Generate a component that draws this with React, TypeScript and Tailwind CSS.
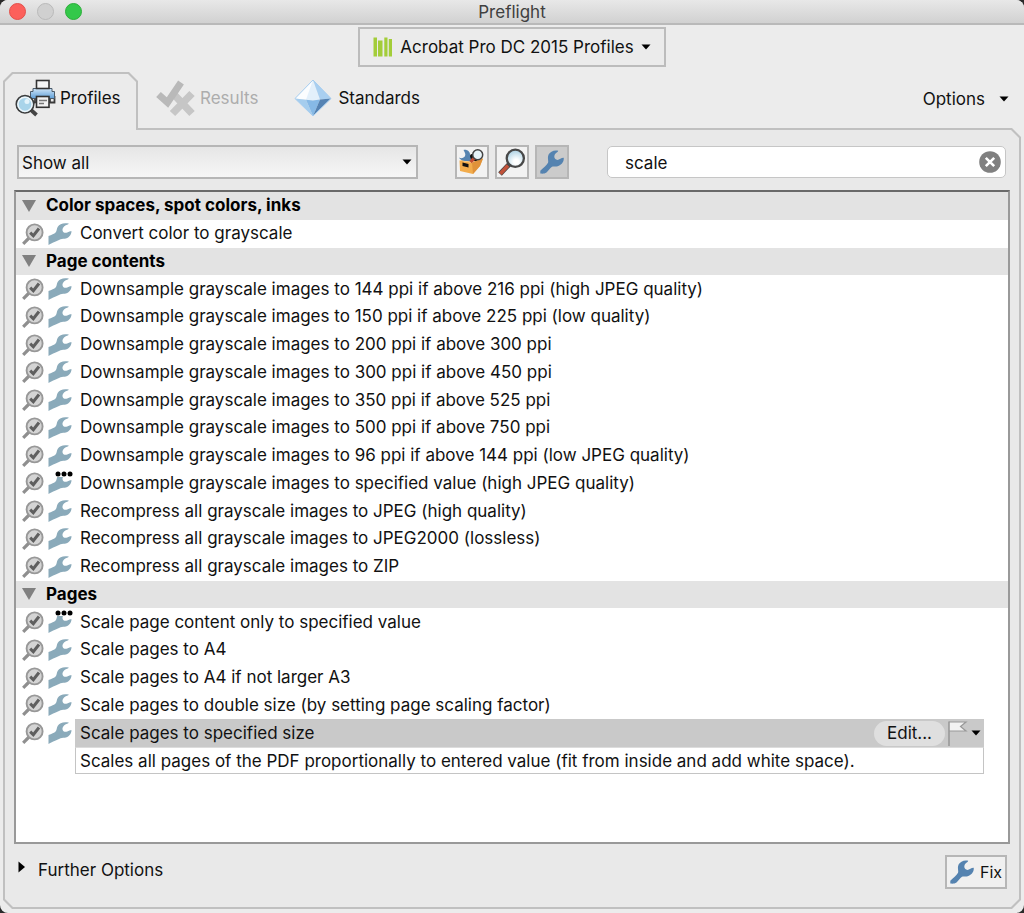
import React, { useState } from "react";

type Item = { label: string; dots?: boolean };
type Group = { title: string; items: Item[] };

const groups: Group[] = [
  { title: "Color spaces, spot colors, inks", items: [{ label: "Convert color to grayscale" }] },
  {
    title: "Page contents",
    items: [
      { label: "Downsample grayscale images to 144 ppi if above 216 ppi (high JPEG quality)" },
      { label: "Downsample grayscale images to 150 ppi if above 225 ppi (low quality)" },
      { label: "Downsample grayscale images to 200 ppi if above 300 ppi" },
      { label: "Downsample grayscale images to 300 ppi if above 450 ppi" },
      { label: "Downsample grayscale images to 350 ppi if above 525 ppi" },
      { label: "Downsample grayscale images to 500 ppi if above 750 ppi" },
      { label: "Downsample grayscale images to 96 ppi if above 144 ppi (low JPEG quality)" },
      { label: "Downsample grayscale images to specified value (high JPEG quality)", dots: true },
      { label: "Recompress all grayscale images to JPEG (high quality)" },
      { label: "Recompress all grayscale images to JPEG2000 (lossless)" },
      { label: "Recompress all grayscale images to ZIP" },
    ],
  },
  {
    title: "Pages",
    items: [
      { label: "Scale page content only to specified value", dots: true },
      { label: "Scale pages to A4" },
      { label: "Scale pages to A4 if not larger A3" },
      { label: "Scale pages to double size (by setting page scaling factor)" },
    ],
  },
];

function Wrench({ className }: { className: string }) {
  return (
    <svg viewBox="0 0 24 24" className={className} aria-hidden="true">
      <path
        fill="currentColor"
        d="M0.500 14C3.500 12.800 6.300 12 7.800 10.200C9 8.700 8.500 6.800 9.800 4.800C11.700 1.800 15.500 0.500 20.800 1.600C20.500 2.900 18.200 2.700 16.300 4.300C14.700 5.700 14 7.800 14.800 9.300C15.700 11 17.500 11 19.300 10.400C21 9.800 22 8.800 23.600 9.300C23.300 13 20.500 16.500 16.500 16.800C14.500 17 13.300 16.700 11 17.900C8 19.500 5.500 20 0.500 23Z"
      />
    </svg>
  );
}

function BoldWrench({ className }: { className: string }) {
  return (
    <svg viewBox="0 0 24 24" className={className} aria-hidden="true">
      <path
        fill="#5583b0"
        d="M0.300 20.800C3.500 18 7 14.800 8 12.800C8.800 11 7 8 8.600 4.600C10.200 1.500 14 -0.300 18.200 0.700C18.300 1.900 15.500 3 14.700 4.800C13.900 6.700 14.300 8.600 16.200 9.600C18.800 10.800 20.800 7.700 23.700 7.800C24.300 11.500 21.500 15.300 17.700 16.200C15.200 16.800 13.500 16 12 16.800C9.800 18 8.500 20.800 6.500 22.500C4.700 23.900 2.500 23.600 0.300 23.600Z"
      />
    </svg>
  );
}

function CheckLens() {
  return (
    <svg viewBox="0 0 22 22" className="size-[22px] shrink-0" aria-hidden="true">
      <path d="M1.200 20.800L7 15" stroke="#8f8f8f" strokeWidth="3.200" />
      <circle cx="12.600" cy="9.400" r="8" fill="#d4d4d4" stroke="#989898" strokeWidth="1.900" />
      <path d="M8.200 9.600L11.300 12.700L17 5.500" fill="none" stroke="#5f5f5f" strokeWidth="3" />
    </svg>
  );
}

function Caret({ className = "" }: { className?: string }) {
  return (
    <svg viewBox="0 0 10 6" className={`w-[10px] h-[6px] shrink-0 ${className}`} aria-hidden="true">
      <path d="M0.500 0.500H9.500L5 5.500Z" fill="#000" />
    </svg>
  );
}

function PrinterIcon() {
  return (
    <svg viewBox="0 0 42 38" className="w-[42px] h-[38px] shrink-0" aria-hidden="true">
      <defs>
        <linearGradient id="printer" x1="0" y1="0" x2="0" y2="1">
          <stop offset="0" stopColor="#cfe5f8" />
          <stop offset="1" stopColor="#5f9fd8" />
        </linearGradient>
      </defs>
      <path d="M19 16h17v8h-17z" fill="#555" />
      <path d="M15.500 17v6.500h5M39.500 17v6.500h-5" fill="none" stroke="#3a3a3a" strokeWidth="1.800" />
      <path d="M18 9.500h19v3h2.500v7h-24v-7h2.500Z" fill="url(#printer)" stroke="#4b5b6b" strokeWidth="1" />
      <rect x="21.500" y="1.500" width="12.500" height="8" fill="#f5f5f5" stroke="#333" strokeWidth="1.600" />
      <rect x="21.500" y="17.500" width="12.500" height="10.800" fill="#f1f1f1" stroke="#333" strokeWidth="1.600" />
      <path d="M24 21.500h8M24 24.500h5" stroke="#777" strokeWidth="1.300" />
      <path d="M15.500 30.500L21.500 36" stroke="#444" strokeWidth="3.800" />
      <circle cx="10" cy="25.300" r="8.700" fill="#a9d4ea" stroke="#3d3d3d" strokeWidth="1.700" />
      <circle cx="10" cy="25.300" r="7.100" fill="none" stroke="#eef6fa" strokeWidth="1.500" />
      <circle cx="12" cy="22.500" r="2.500" fill="#e3f3fb" />
    </svg>
  );
}

function ResultsIcon() {
  return (
    <svg viewBox="0 0 40 38" className="w-[40px] h-[38px] shrink-0" aria-hidden="true">
      <path d="M17 14.500L36 34.500M36 14.500L16.500 34.500" stroke="#c6c6c6" strokeWidth="7.500" />
      <path d="M2.500 15.500L11.500 23.500L25 3.500" fill="none" stroke="#b9b9b9" strokeWidth="7" />
    </svg>
  );
}

function DiamondIcon() {
  return (
    <svg viewBox="0 0 38 38" className="size-[38px] shrink-0" aria-hidden="true">
      <path d="M19 1L1 19.500L19 21.500Z" fill="#fbfdff" />
      <path d="M19 1L12 20.700L19 21.500L26 20.500Z" fill="#e3f0fb" />
      <path d="M19 1L37 19.500L26 20.500Z" fill="#a9cff0" />
      <path d="M1 19.500L12 20.700L19 37Z" fill="#a5cdee" />
      <path d="M12 20.700L19 21.500L26 20.500L19 37Z" fill="#86b9e6" />
      <path d="M37 19.500L26 20.500L19 37Z" fill="#5583b3" />
      <path d="M19 1L37 19.500L19 37L1 19.500Z" fill="none" stroke="#a5cdf0" strokeWidth="1" />
    </svg>
  );
}

function LensIcon() {
  return (
    <svg viewBox="0 0 30 30" className="size-[30px]" aria-hidden="true">
      <defs>
        <radialGradient id="lens" cx="0.550" cy="0.700" r="0.700">
          <stop offset="0.200" stopColor="#fff" />
          <stop offset="1" stopColor="#a9cfe2" />
        </radialGradient>
      </defs>
      <path d="M3 27L12.500 17" stroke="#444" strokeWidth="5" />
      <path d="M3.300 26.700L11 18.500" stroke="#c2523a" strokeWidth="3.600" />
      <circle cx="18.300" cy="11.300" r="8.600" fill="url(#lens)" stroke="#484848" strokeWidth="2.300" />
    </svg>
  );
}

function ToolboxIcon() {
  return (
    <svg viewBox="0 0 30 30" className="size-[30px] shrink-0" aria-hidden="true">
      <path d="M11 12L14 7L22 9L20 15Z" fill="#111" />
      <path d="M2.500 13.500L15 15.500L26 11.500L23 19L16 27L3 24Z" fill="#f2ac4c" />
      <path d="M15 15.500L26 11.500L23 19L16 27Z" fill="#e0923a" />
      <path d="M2.500 13.500L7 12L17 14.500L15 16Z" fill="#f9c77a" />
      <path d="M5.500 15.500L11.500 17v3.500L5.500 19Z" fill="#111" />
      <path d="M2 10.500C4 12 7 11 8 9C9 7 7.500 5 6.500 3C10 2.200 13.200 4.500 13 8C12.800 10.500 14 12 15.500 14.500L10 14C7.500 14 4 14 2 10.500Z" fill="#5583b0" />
      <path d="M13.500 15L17.500 11" stroke="#c14c32" strokeWidth="3.400" />
      <circle cx="20.700" cy="7.700" r="5" fill="#e8f3f8" stroke="#444" strokeWidth="1.500" />
    </svg>
  );
}

function RowIcons({ dots }: { dots?: boolean }) {
  return (
    <span className="flex w-[60px] shrink-0 items-center gap-1 pl-[6px]">
      <CheckLens />
      <span className="relative flex">
        <Wrench className="size-6 text-[#8aaaba]" />
        {dots && (
          <svg viewBox="0 0 18 6" className="absolute top-0 left-[7px] h-[6px] w-[18px] bg-white" aria-hidden="true">
            <circle cx="3" cy="3" r="2.500" />
            <circle cx="9" cy="3" r="2.500" />
            <circle cx="15" cy="3" r="2.500" />
          </svg>
        )}
      </span>
    </span>
  );
}

const toolButton = "flex size-[34px] items-center justify-center border-2 border-[#b6b6b6] ";

export default function App() {
  const [query, setQuery] = useState("scale");
  return (
    <div className="min-h-screen bg-[#2a2a2a] font-['Inter','Liberation_Sans',sans-serif] text-[17px] leading-6 text-[#111]">
      <main className="flex min-h-screen flex-col overflow-hidden rounded-lg bg-[#ececec]">
        <header className="relative flex h-[25px] items-center justify-center border-b-2 border-[#b9b9b9] bg-linear-to-b from-[#e8e8e8] to-[#d1d1d1]">
          <div className="absolute left-[9px] flex gap-[11px]">
            <button aria-label="Close" className="size-[17px] rounded-full border border-[#e2504b] bg-[#fc605b]" />
            <button aria-label="Minimize" className="size-[17px] rounded-full border border-[#b9b9b9] bg-[#d0d0d0]" />
            <button aria-label="Zoom" className="size-[17px] rounded-full border border-[#2cae3a] bg-[#34c84a]" />
          </div>
          <h1 className="text-[#404040]">Preflight</h1>
        </header>

        <div className="flex justify-center pt-[2px]">
          <button className="flex h-10 items-center border-2 border-[#bcbcbc] bg-[#ebebeb] px-[13px]">
            <svg viewBox="0 0 20 20" className="size-5" fill="#a3cd39" aria-hidden="true">
              <path d="M0.500 0.500h3.500v19h-3.500zM5 3.500h4.500v16h-4.500zM11.300 0.500h3.200v19h-3.200zM15.800 2h3.200v17.500h-3.200z" />
            </svg>
            <span className="ml-[7px]">Acrobat Pro DC 2015 Profiles</span>
            <Caret className="ml-[7px]" />
          </button>
        </div>

        <div className="flex flex-1 flex-col px-[3px] pt-[5px] pb-1">
          <nav className="relative z-10 -mb-[2px] flex h-[58px]">
            <div className="flex w-[135px] bg-[#c0c0c0] px-[2px] pt-[2px] [clip-path:polygon(9px_0,calc(100%-9px)_0,100%_9px,100%_100%,0_100%,0_9px)]">
              <button className="flex flex-1 items-center bg-[#ebebeb] pb-[9px] pl-[10px] [clip-path:polygon(8px_0,calc(100%-8px)_0,100%_8px,100%_100%,0_100%,0_8px)]">
                <PrinterIcon />
                <span className="ml-[3px]">Profiles</span>
              </button>
            </div>
            <button disabled className="ml-[18px] flex items-center pb-[7px] text-[#adadad]">
              <ResultsIcon />
              <span className="ml-1">Results</span>
            </button>
            <button className="ml-9 flex items-center pb-[7px]">
              <DiamondIcon />
              <span className="ml-[6px]">Standards</span>
            </button>
            <button className="mr-3 ml-auto flex items-center pb-1">
              Options
              <Caret className="ml-[14px]" />
            </button>
          </nav>

          <section className="flex flex-1 bg-[#c0c0c0] p-[2px] [clip-path:polygon(0_0,calc(100%-9px)_0,100%_9px,100%_calc(100%-9px),calc(100%-9px)_100%,9px_100%,0_calc(100%-9px))]">
            <div className="flex min-w-0 flex-1 flex-col bg-[#e9e9e9] px-[9px] pt-[15px] pb-[18px] [clip-path:polygon(0_0,calc(100%-8px)_0,100%_8px,100%_calc(100%-8px),calc(100%-8px)_100%,8px_100%,0_calc(100%-8px))]">
              <div className="flex items-center pr-1 pl-[3px]">
                <div className="relative flex w-[401px] items-center">
                  <select
                    aria-label="Filter"
                    className="h-[34px] w-full appearance-none border-2 border-[#b6b6b6] bg-linear-to-b from-[#e6e6e6] to-[#f6f6f6] pt-[2px] pl-[3px]"
                  >
                    <option>Show all</option>
                  </select>
                  <Caret className="pointer-events-none absolute right-[6px]" />
                </div>
                <div className="ml-[37px] flex gap-[6px]">
                  <button aria-label="Profiles" className={toolButton + "bg-[#f2f2f2]"}>
                    <ToolboxIcon />
                  </button>
                  <button aria-label="Checks" className={toolButton + "bg-[#f2f2f2]"}>
                    <LensIcon />
                  </button>
                  <button aria-label="Fixups" className={toolButton + "bg-[#cbcbcb]"}>
                    <BoldWrench className="size-6" />
                  </button>
                </div>
                <div className="relative ml-[38px] flex flex-1 items-center">
                  <input
                    aria-label="Search"
                    value={query}
                    onChange={(e) => setQuery(e.target.value)}
                    className="h-8 w-full rounded-[5px] border border-[#c6c6c6] bg-white pt-[2px] pr-8 pl-[17px] outline-none"
                  />
                  <button aria-label="Clear search" onClick={() => setQuery("")} className="absolute right-[5px]">
                    <svg viewBox="0 0 22 22" className="size-[22px]" aria-hidden="true">
                      <circle cx="11" cy="11" r="10.800" fill="#808080" />
                      <path d="M6.800 6.800L15.200 15.200M15.200 6.800L6.800 15.200" stroke="#fff" strokeWidth="2.600" />
                    </svg>
                  </button>
                </div>
              </div>

              <div className="mt-[11px] flex-1 border-2 border-[#999] border-t-[#6a6a6a] bg-white">
                <div className="flex h-[555px] flex-col">
                  {groups.map((g) => (
                    <React.Fragment key={g.title}>
                      <h2 className="flex flex-1 items-center bg-[#e3e3e3] pl-[6px] font-bold text-black">
                        <svg viewBox="0 0 14 12" className="h-3 w-[14px]" aria-hidden="true">
                          <path d="M0 0H14L7 12Z" fill="#808080" />
                        </svg>
                        <span className="ml-[10px] pb-px">{g.title}</span>
                      </h2>
                      {g.items.map((it) => (
                        <div key={it.label} className="flex flex-1 items-center">
                          <RowIcons dots={it.dots} />
                          <span className="ml-1 pb-px">{it.label}</span>
                        </div>
                      ))}
                    </React.Fragment>
                  ))}
                  <div className="flex flex-1 items-center pr-6">
                    <RowIcons />
                    <div className="-ml-px flex flex-1 items-center self-stretch bg-[#c9c9c9] pl-[5px]">
                      <span className="flex-1 pb-px">Scale pages to specified size</span>
                      <button className="h-[25px] rounded-full bg-[#dfdfdf] px-[13px]">Edit...</button>
                      <button aria-label="Flag" className="ml-[3px] flex items-center gap-[3px] pr-[3px]">
                        <svg viewBox="0 0 20 26" className="h-[26px] w-5" aria-hidden="true">
                          <path d="M1 2H18L12.500 6.500L18 11H1" fill="#f3f3f3" stroke="#999" strokeWidth="1.200" />
                          <path d="M1 1.500V26" stroke="#999" strokeWidth="1.600" />
                        </svg>
                        <Caret />
                      </button>
                    </div>
                  </div>
                </div>
                <p className="mr-6 ml-[59px] border border-[#c4c4c4] border-t-[#dcdcdc] pt-[1px] pl-1">
                  Scales all pages of the PDF proportionally to entered value (fit from inside and add white space).
                </p>
              </div>

              <footer className="mt-[11px] flex items-start justify-between pr-[3px] pl-1">
                <button className="flex items-start pt-[3px]">
                  <svg viewBox="0 0 8 12" className="mt-[3px] h-3 w-2" aria-hidden="true">
                    <path d="M0.500 0.500V11.500L7 6Z" />
                  </svg>
                  <span className="ml-3">Further Options</span>
                </button>
                <button className="flex h-[34px] items-center gap-[6px] border-2 border-[#b6b6b6] bg-[#f0f0f0] px-[3px] text-base">
                  <BoldWrench className="size-6" />
                  Fix
                </button>
              </footer>
            </div>
          </section>
        </div>
      </main>
    </div>
  );
}
